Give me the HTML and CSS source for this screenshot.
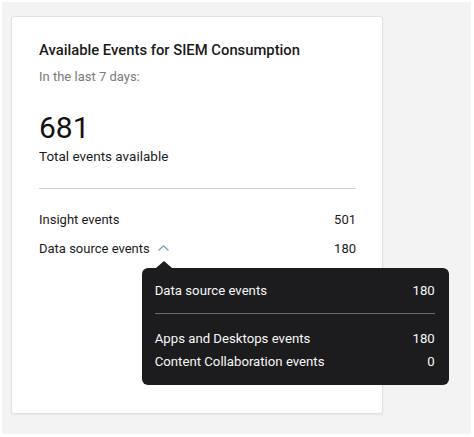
FILE: index.html
```html
<!DOCTYPE html>
<html lang="en">
<head>
<meta charset="utf-8">
<title>Available Events for SIEM Consumption</title>
<link rel="stylesheet" href="styles.css">
</head>
<body>
<div class="frame">
  <section class="card">
    <h2 class="title">Available Events for SIEM Consumption</h2>
    <p class="sub">In the last 7 days:</p>
    <div class="total">681</div>
    <div class="total-label">Total events available</div>
    <hr class="divider">
    <div class="rows">
      <div class="row">
        <span class="label">Insight events</span>
        <span class="num">501</span>
      </div>
      <div class="row">
        <span class="label">Data source events
          <span class="toggle">
            <svg class="chev" width="11" height="6" viewBox="0 0 11 6"><path d="M0.5 5.5 L5.5 0.8 L10.5 5.5" fill="none" stroke="#6e9ba8" stroke-width="1.1"/></svg>
            <div class="tooltip">
              <div class="tip-row"><span>Data source events</span><span>180</span></div>
              <hr class="tip-divider">
              <div class="tip-row tip-row-a"><span>Apps and Desktops events</span><span>180</span></div>
              <div class="tip-row tip-row-b"><span>Content Collaboration events</span><span>0</span></div>
            </div>
          </span>
        </span>
        <span class="num">180</span>
      </div>
    </div>
  </section>
</div>
</body>
</html>
```

FILE: styles.css
```css
html, body {
  margin: 0;
  padding: 0;
  background: #ffffff;
}
body {
  font-family: "Roboto", "Liberation Sans", sans-serif;
  color: #1b1b1b;
}
.frame {
  margin: 2px 3px 3px 2px;
  width: 469px;
  height: 432px;
  background: #f3f3f3;
  padding: 14px 0 0 9px;
  box-sizing: border-box;
}
.card {
  width: 372px;
  height: 398px;
  box-sizing: border-box;
  background: #ffffff;
  border: 1px solid #e2e2e2;
  border-radius: 3px;
  box-shadow: 0 1px 2px rgba(0,0,0,0.06);
  padding: 23px 26px 0 27px;
}
.title {
  margin: 0;
  font-size: 14.8px;
  font-weight: 500;
  line-height: 20px;
  color: #1b1b1b;
}
.sub {
  margin: 8px 0 0;
  font-size: 13px;
  line-height: 18px;
  color: #7b7b7b;
}
.total {
  margin-top: 25px;
  font-size: 30px;
  line-height: 34px;
  font-weight: 400;
  color: #111;
}
.total-label {
  margin-top: 2px;
  font-size: 13.5px;
  line-height: 18px;
}
.divider {
  margin: 23px 0 0;
  border: 0;
  border-top: 1px solid #cfcfcf;
  height: 0;
}
.rows {
  margin-top: 21px;
  display: flex;
  flex-direction: column;
  gap: 9px;
}
.row {
  display: flex;
  justify-content: space-between;
  align-items: center;
  font-size: 13px;
  line-height: 20px;
}
.label {
  display: inline-flex;
  align-items: center;
}
.toggle {
  position: relative;
  display: inline-flex;
  align-items: center;
  justify-content: center;
  width: 16px;
  height: 20px;
  margin-left: 6px;
}
.chev {
  display: block;
  margin-top: -3px;
}
.tooltip {
  position: absolute;
  left: -14px;
  top: 29px;
  width: 307px;
  box-sizing: border-box;
  background: #1c1c1e;
  color: #f7f7f7;
  border-radius: 6px;
  padding: 13px 14px 13px 13px;
  font-size: 13.2px;
  line-height: 20px;
  font-weight: 400;
}
.tooltip::before {
  content: "";
  position: absolute;
  left: 14px;
  top: -7px;
  width: 0;
  height: 0;
  border-left: 8px solid transparent;
  border-right: 8px solid transparent;
  border-bottom: 7px solid #1c1c1e;
}
.tip-row {
  display: flex;
  justify-content: space-between;
}
.tip-divider {
  margin: 12px 0 0;
  border: 0;
  border-top: 1px solid #6c6c6e;
  height: 0;
}
.tip-row-a {
  margin-top: 15px;
}
.tip-row-b {
  margin-top: 3px;
}
```
